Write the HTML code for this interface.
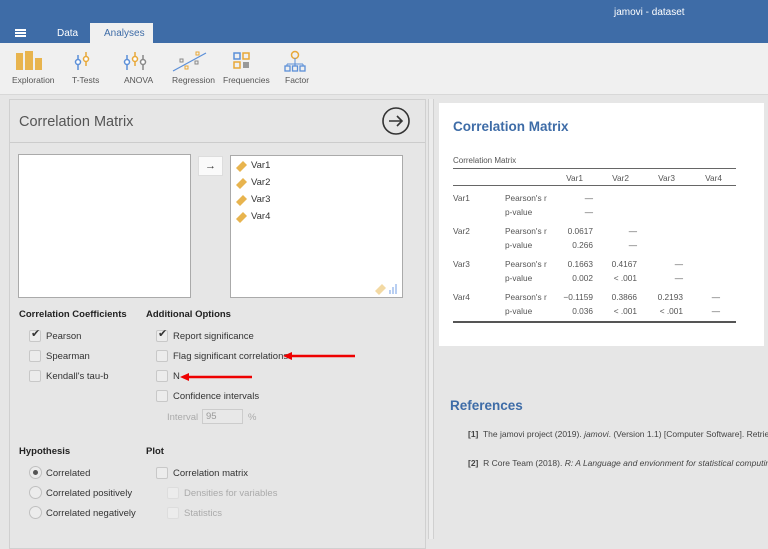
<!DOCTYPE html>
<html><head><style>
*{margin:0;padding:0;box-sizing:border-box}
body{width:768px;height:537px;overflow:hidden;background:#e6e6e6;font-family:"Liberation Sans",sans-serif;position:relative;color:#333}
.a{position:absolute}
.t{font-size:9.5px;white-space:nowrap}
.cb{position:absolute;width:12px;height:12px;border:1px solid #c8c8c8;background:#ececec;border-radius:2px}
.rd{position:absolute;width:13px;height:13px;border:1px solid #c0c0c0;background:#ececec;border-radius:50%}
.lbl{position:absolute;font-size:9.5px;color:#333;white-space:nowrap}
.h{position:absolute;font-size:9.5px;font-weight:bold;color:#222}
.tb{position:absolute;font-size:8.5px;color:#555;white-space:nowrap}
.tab td{font-size:8.3px;color:#555;height:14px;white-space:nowrap}
</style></head><body>
<div class="a" style="left:0;top:0;width:768px;height:43px;background:#3e6ca7"></div>
<div class="a t" style="left:614px;top:7px;color:#fff;font-size:10px">jamovi - dataset</div>
<div class="a" style="left:15px;top:29px;width:11px;height:2px;background:#fff;box-shadow:0 3px 0 #fff,0 6px 0 #fff"></div>
<div class="a t" style="left:57px;top:28px;color:#fff;font-size:10px">Data</div>
<div class="a" style="left:90px;top:23px;width:63px;height:21px;background:#f0f0f0"></div>
<div class="a t" style="left:104px;top:28px;color:#3e6ca7;font-size:10px">Analyses</div>
<div class="a" style="left:0;top:43px;width:768px;height:52px;background:#f0f0f0;border-bottom:1px solid #d8d8d8"></div>
<svg class="a" style="left:0;top:45px" width="320" height="32">
<rect x="16" y="8" width="7" height="17" fill="#e8b44e"/><rect x="25" y="6" width="8" height="19" fill="#e8b44e"/><rect x="35" y="13" width="7" height="12" fill="#e8b44e"/>
<g stroke="#5b8fd8" stroke-width="1.5" fill="none"><line x1="78" y1="10" x2="78" y2="25"/><circle cx="78" cy="17" r="2.5" fill="#fff"/></g>
<g stroke="#e8a838" stroke-width="1.5" fill="none"><line x1="86" y1="7" x2="86" y2="21"/><circle cx="86" cy="14" r="2.5" fill="#fff"/></g>
<g stroke="#5b8fd8" stroke-width="1.5" fill="none"><line x1="127" y1="10" x2="127" y2="25"/><circle cx="127" cy="17" r="2.5" fill="#fff"/></g>
<g stroke="#e8a838" stroke-width="1.5" fill="none"><line x1="135" y1="7" x2="135" y2="21"/><circle cx="135" cy="14" r="2.5" fill="#fff"/></g>
<g stroke="#888" stroke-width="1.5" fill="none"><line x1="143" y1="10" x2="143" y2="25"/><circle cx="143" cy="17" r="2.5" fill="#fff"/></g>
<line x1="173" y1="26" x2="206" y2="8" stroke="#5b8fd8" stroke-width="1.2"/>
<rect x="180" y="14" width="3" height="3" fill="none" stroke="#888"/><rect x="185" y="21" width="3" height="3" fill="none" stroke="#e8a838"/><rect x="195" y="16" width="3" height="3" fill="none" stroke="#888"/><rect x="196" y="7" width="3" height="3" fill="none" stroke="#e8a838"/>
<rect x="234" y="8" width="6" height="6" fill="none" stroke="#5b8fd8" stroke-width="1.5"/><rect x="243" y="8" width="6" height="6" fill="none" stroke="#e8a838" stroke-width="1.5"/><rect x="234" y="17" width="6" height="6" fill="none" stroke="#e8a838" stroke-width="1.5"/><rect x="243" y="17" width="6" height="6" fill="#999"/>
<circle cx="295" cy="10" r="3.5" fill="none" stroke="#e8a838" stroke-width="1.5"/>
<path d="M295 13v5M287 19h16M287 19v2M295 18v3M303 19v2" stroke="#5b8fd8" fill="none"/>
<rect x="285" y="21" width="5" height="5" fill="none" stroke="#5b8fd8" stroke-width="1.3"/><rect x="292.5" y="21" width="5" height="5" fill="none" stroke="#5b8fd8" stroke-width="1.3"/><rect x="300" y="21" width="5" height="5" fill="none" stroke="#5b8fd8" stroke-width="1.3"/>
</svg>
<div class="tb" style="left:12px;top:75px">Exploration</div>
<div class="tb" style="left:72px;top:75px">T-Tests</div>
<div class="tb" style="left:124px;top:75px">ANOVA</div>
<div class="tb" style="left:172px;top:75px">Regression</div>
<div class="tb" style="left:223px;top:75px">Frequencies</div>
<div class="tb" style="left:285px;top:75px">Factor</div>

<div class="a" style="left:9px;top:99px;width:417px;height:450px;border:1px solid #d0d0d0;background:#e6e6e6"></div>
<div class="a" style="left:10px;top:142px;width:415px;height:1px;background:#ccc"></div>
<div class="a" style="left:19px;top:114px;font-size:14.5px;color:#555">Correlation Matrix</div>
<svg class="a" style="left:381px;top:106px" width="30" height="30"><circle cx="15" cy="15" r="13" fill="none" stroke="#333" stroke-width="1.6"/><path d="M8 15h13M16 10l5 5-5 5" fill="none" stroke="#333" stroke-width="1.6"/></svg>
<div class="a" style="left:428px;top:99px;width:6px;height:440px;background:#ececec;border-left:1px solid #d0d0d0;border-right:1px solid #d0d0d0"></div>

<div class="a" style="left:18px;top:154px;width:173px;height:144px;background:#fff;border:1px solid #aaa"></div>
<div class="a" style="left:198px;top:156px;width:25px;height:20px;background:#fafafa;border:1px solid #ddd;font-size:11px;text-align:center;line-height:18px">&#8594;</div>
<div class="a" style="left:230px;top:155px;width:173px;height:143px;background:#fff;border:1px solid #aaa"></div>
<svg class="a" style="left:234px;top:159px" width="16" height="70"><g fill="#e8b44e"><path d="M2 9l7-7 4 4-7 7z"/><path d="M2 26l7-7 4 4-7 7z"/><path d="M2 43l7-7 4 4-7 7z"/><path d="M2 60l7-7 4 4-7 7z"/></g></svg>
<div class="lbl" style="left:251px;top:160px">Var1</div>
<div class="lbl" style="left:251px;top:177px">Var2</div>
<div class="lbl" style="left:251px;top:194px">Var3</div>
<div class="lbl" style="left:251px;top:211px">Var4</div>
<svg class="a" style="left:373px;top:281px" width="28" height="14"><path d="M2 10l7-7 4 4-7 7z" fill="#f3d9a3"/><rect x="16" y="9" width="2" height="4" fill="#b9cff2"/><rect x="19" y="6" width="2" height="7" fill="#b9cff2"/><rect x="22" y="3" width="2" height="10" fill="#b9cff2"/></svg>

<div class="h" style="left:19px;top:309px">Correlation Coefficients</div>
<div class="h" style="left:146px;top:309px">Additional Options</div>
<div class="cb" style="left:29px;top:330px"></div><div class="a" style="left:31px;top:327px;font-size:11px">&#10004;</div>
<div class="lbl" style="left:46px;top:331px">Pearson</div>
<div class="cb" style="left:29px;top:350px"></div><div class="lbl" style="left:46px;top:351px">Spearman</div>
<div class="cb" style="left:29px;top:370px"></div><div class="lbl" style="left:46px;top:371px">Kendall's tau-b</div>
<div class="cb" style="left:156px;top:330px"></div><div class="a" style="left:158px;top:327px;font-size:11px">&#10004;</div>
<div class="lbl" style="left:173px;top:331px">Report significance</div>
<div class="cb" style="left:156px;top:350px"></div><div class="lbl" style="left:173px;top:351px">Flag significant correlations</div>
<div class="cb" style="left:156px;top:370px"></div><div class="lbl" style="left:173px;top:371px">N</div>
<div class="cb" style="left:156px;top:390px"></div><div class="lbl" style="left:173px;top:391px">Confidence intervals</div>
<div class="lbl" style="left:167px;top:412px;color:#aaa">Interval</div>
<div class="a" style="left:202px;top:409px;width:41px;height:15px;border:1px solid #ccc;background:#e8e8e8;font-size:9.5px;color:#999;padding-left:3px;line-height:13px">95</div>
<div class="lbl" style="left:248px;top:412px;color:#aaa">%</div>
<svg class="a" style="left:280px;top:348px" width="80" height="36"><path d="M6 8H75" stroke="#e00" stroke-width="2.5"/><path d="M3 8l9-4v8z" fill="#e00"/><path d="M-100 0" /></svg>
<svg class="a" style="left:177px;top:369px" width="80" height="14"><path d="M6 8H75" stroke="#e00" stroke-width="2.5"/><path d="M3 8l9-4v8z" fill="#e00"/></svg>

<div class="h" style="left:19px;top:446px">Hypothesis</div>
<div class="h" style="left:146px;top:446px">Plot</div>
<div class="rd" style="left:29px;top:466px"></div><div class="a" style="left:33px;top:470px;width:5px;height:5px;border-radius:50%;background:#555"></div>
<div class="lbl" style="left:46px;top:468px">Correlated</div>
<div class="rd" style="left:29px;top:486px"></div><div class="lbl" style="left:46px;top:488px">Correlated positively</div>
<div class="rd" style="left:29px;top:506px"></div><div class="lbl" style="left:46px;top:508px">Correlated negatively</div>
<div class="cb" style="left:156px;top:467px"></div><div class="lbl" style="left:173px;top:468px">Correlation matrix</div>
<div class="cb" style="left:167px;top:487px;border-color:#ddd"></div><div class="lbl" style="left:184px;top:488px;color:#aaa">Densities for variables</div>
<div class="cb" style="left:167px;top:507px;border-color:#ddd"></div><div class="lbl" style="left:184px;top:508px;color:#aaa">Statistics</div>

<div class="a" style="left:439px;top:103px;width:325px;height:243px;background:#fff"></div>
<div class="a" style="left:453px;top:119px;font-size:13.5px;font-weight:bold;color:#3e6ca7">Correlation Matrix</div>
<div class="a" style="left:453px;top:156px;font-size:8px;color:#555">Correlation Matrix</div>
<div class="a" style="left:453px;top:168px;width:283px;height:1px;background:#666"></div>
<div class="a" style="left:453px;top:185px;width:283px;height:1px;background:#666"></div>
<div class="a" style="left:453px;top:321px;width:283px;height:2px;background:#555"></div>
<table class="a tab" style="left:453px;top:170px;width:283px;border-collapse:collapse">
<tr style="height:15px"><td></td><td></td><td style="text-align:right;padding-right:10px">Var1</td><td style="text-align:right;padding-right:8px">Var2</td><td style="text-align:right;padding-right:8px">Var3</td><td style="text-align:right;padding-right:14px">Var4</td></tr>
<tr><td style="height:6px" colspan=6></td></tr>
<tr><td style="width:52px">Var1</td><td style="width:50px">Pearson's r</td><td style="text-align:right;width:38px">—</td><td></td><td></td><td></td></tr>
<tr><td></td><td>p-value</td><td style="text-align:right">—</td><td></td><td></td><td></td></tr>
<tr><td style="height:5px" colspan=6></td></tr>
<tr><td>Var2</td><td>Pearson's r</td><td style="text-align:right">0.0617</td><td style="text-align:right;width:44px">—</td><td></td><td></td></tr>
<tr><td></td><td>p-value</td><td style="text-align:right">0.266</td><td style="text-align:right">—</td><td></td><td></td></tr>
<tr><td style="height:5px" colspan=6></td></tr>
<tr><td>Var3</td><td>Pearson's r</td><td style="text-align:right">0.1663</td><td style="text-align:right">0.4167</td><td style="text-align:right;width:46px">—</td><td></td></tr>
<tr><td></td><td>p-value</td><td style="text-align:right">0.002</td><td style="text-align:right">&lt; .001</td><td style="text-align:right">—</td><td></td></tr>
<tr><td style="height:5px" colspan=6></td></tr>
<tr><td>Var4</td><td>Pearson's r</td><td style="text-align:right">−0.1159</td><td style="text-align:right">0.3866</td><td style="text-align:right">0.2193</td><td style="text-align:right;padding-right:16px">—</td></tr>
<tr><td></td><td>p-value</td><td style="text-align:right">0.036</td><td style="text-align:right">&lt; .001</td><td style="text-align:right">&lt; .001</td><td style="text-align:right;padding-right:16px">—</td></tr>
</table>

<div class="a" style="left:450px;top:398px;font-size:13.5px;font-weight:bold;color:#3e6ca7">References</div>
<div class="a t" style="left:468px;top:429px;font-size:8.5px;color:#444"><b>[1]</b>&nbsp; The jamovi project (2019). <i>jamovi</i>. (Version 1.1) [Computer Software]. Retrieved</div>
<div class="a t" style="left:468px;top:458px;font-size:8.5px;color:#444"><b>[2]</b>&nbsp; R Core Team (2018). <i>R: A Language and envionment for statistical computing</i></div>
</body></html>
